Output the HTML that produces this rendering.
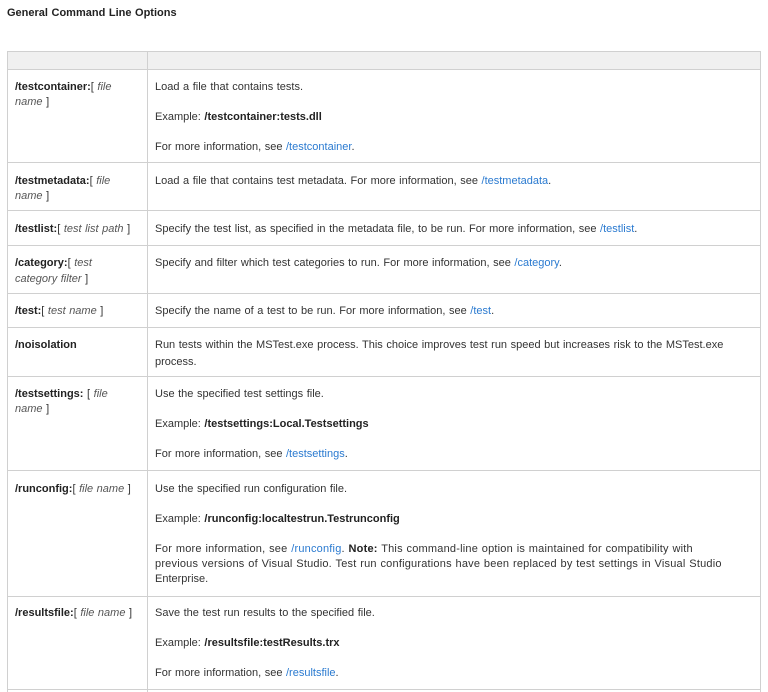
<!DOCTYPE html>
<html><head><meta charset="utf-8"><style>
body{margin:0;background:#fff;width:768px;height:692px;overflow:hidden;position:relative;font-family:"Liberation Sans",Arial,sans-serif;font-size:11px;color:#333;letter-spacing:0;word-spacing:0.5px}
.t{position:absolute;white-space:nowrap;line-height:14px}
.h{position:absolute;left:0;height:1px;background:#d0d0d0;left:7px;width:754px}
.v{position:absolute;width:1px;background:#d0d0d0;top:51px;height:641px}
.w{letter-spacing:0.2px}
b{color:#222}
i{color:#555}
a{color:#2a7ad0;text-decoration:none}
</style></head><body>
<div class="t" style="left:7px;top:6px;font-weight:bold;font-size:11px;color:#222">General Command Line Options</div>
<div style="position:absolute;left:7px;top:51px;width:754px;height:18px;background:#f0f0f0"></div>
<div class="h" style="top:51px"></div>
<div class="h" style="top:69px"></div>
<div class="h" style="top:162px"></div>
<div class="h" style="top:210px"></div>
<div class="h" style="top:245px"></div>
<div class="h" style="top:293px"></div>
<div class="h" style="top:327px"></div>
<div class="h" style="top:376px"></div>
<div class="h" style="top:470px"></div>
<div class="h" style="top:596px"></div>
<div class="h" style="top:689px"></div>
<div class="v" style="left:7px"></div>
<div class="v" style="left:147px"></div>
<div class="v" style="left:760px"></div>

<div class="t" style="left:15px;top:80px"><b>/testcontainer:</b>[ <i>file</i></div>
<div class="t" style="left:15px;top:95px"><i>name</i> ]</div>
<div class="t" style="left:155px;top:80px">Load a file that contains tests.</div>
<div class="t" style="left:155px;top:110px">Example: <b>/testcontainer:tests.dll</b></div>
<div class="t" style="left:155px;top:140px">For more information, see <a>/testcontainer</a>.</div>

<div class="t" style="left:15px;top:174px"><b>/testmetadata:</b>[ <i>file</i></div>
<div class="t" style="left:15px;top:189px"><i>name</i> ]</div>
<div class="t" style="left:155px;top:174px">Load a file that contains test metadata. For more information, see <a>/testmetadata</a>.</div>

<div class="t" style="left:15px;top:222px"><b>/testlist:</b>[ <i>test list path</i> ]</div>
<div class="t" style="left:155px;top:222px">Specify the test list, as specified in the metadata file, to be run. For more information, see <a>/testlist</a>.</div>

<div class="t" style="left:15px;top:256px"><b>/category:</b>[ <i>test</i></div>
<div class="t" style="left:15px;top:272px"><i>category filter</i> ]</div>
<div class="t" style="left:155px;top:256px">Specify and filter which test categories to run. For more information, see <a>/category</a>.</div>

<div class="t" style="left:15px;top:304px"><b>/test:</b>[ <i>test name</i> ]</div>
<div class="t" style="left:155px;top:304px">Specify the name of a test to be run. For more information, see <a>/test</a>.</div>

<div class="t" style="left:15px;top:338px"><b>/noisolation</b></div>
<div class="t" style="left:155px;top:338px">Run tests within the MSTest.exe process. This choice improves test run speed but increases risk to the MSTest.exe</div>
<div class="t" style="left:155px;top:355px">process.</div>

<div class="t" style="left:15px;top:387px"><b>/testsettings:</b> [ <i>file</i></div>
<div class="t" style="left:15px;top:402px"><i>name</i> ]</div>
<div class="t" style="left:155px;top:387px">Use the specified test settings file.</div>
<div class="t" style="left:155px;top:417px">Example: <b>/testsettings:Local.Testsettings</b></div>
<div class="t" style="left:155px;top:447px">For more information, see <a>/testsettings</a>.</div>

<div class="t" style="left:15px;top:482px"><b>/runconfig:</b>[ <i>file name</i> ]</div>
<div class="t" style="left:155px;top:482px">Use the specified run configuration file.</div>
<div class="t" style="left:155px;top:512px">Example: <b>/runconfig:localtestrun.Testrunconfig</b></div>
<div class="t w" style="left:155px;top:542px">For more information, see <a>/runconfig</a>. <b>Note:</b> This command-line option is maintained for compatibility with</div>
<div class="t w" style="left:155px;top:557px">previous versions of Visual Studio. Test run configurations have been replaced by test settings in Visual Studio</div>
<div class="t" style="left:155px;top:572px">Enterprise.</div>

<div class="t" style="left:15px;top:606px"><b>/resultsfile:</b>[ <i>file name</i> ]</div>
<div class="t" style="left:155px;top:606px">Save the test run results to the specified file.</div>
<div class="t" style="left:155px;top:636px">Example: <b>/resultsfile:testResults.trx</b></div>
<div class="t" style="left:155px;top:666px">For more information, see <a>/resultsfile</a>.</div>
</body></html>
